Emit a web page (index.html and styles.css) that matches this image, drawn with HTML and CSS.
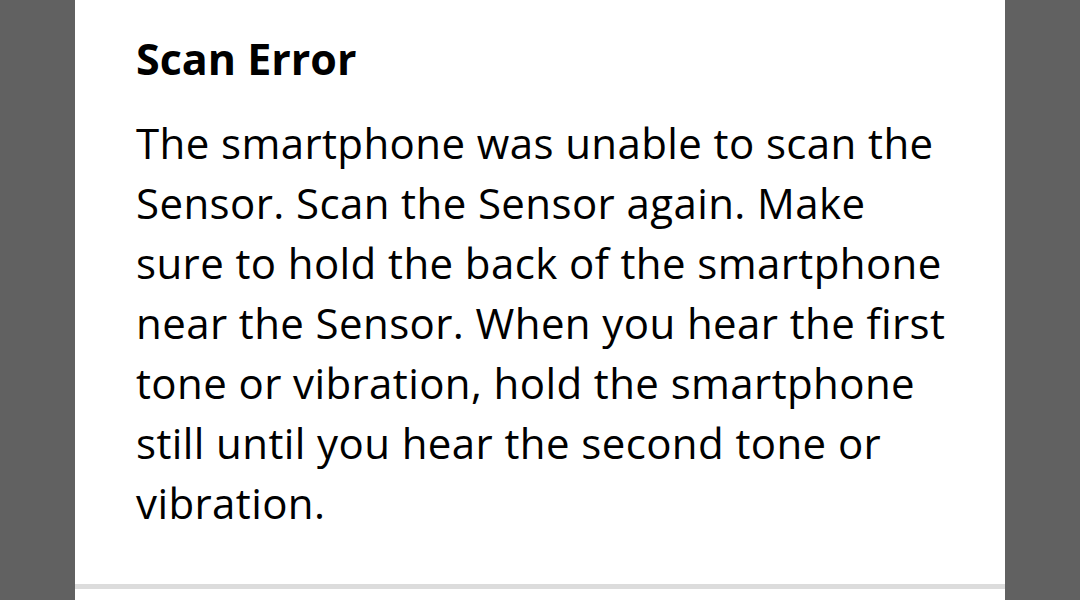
FILE: index.html
```html
<!DOCTYPE html>
<html lang="en">
<head>
  <meta charset="UTF-8">
  <meta name="viewport" content="width=device-width, initial-scale=1.0">
  <title>Scan Error</title>
  <link rel="stylesheet" href="styles.css">
</head>
<body>
  <div class="dialog">
    <h1 class="dialog-title">Scan Error</h1>
    <p class="dialog-message">The smartphone was unable to scan the Sensor. Scan the Sensor again. Make sure to hold the back of the smartphone near the Sensor. When you hear the first tone or vibration, hold the smartphone still until you hear the second tone or vibration.</p>
    <div class="dialog-divider"></div>
  </div>
</body>
</html>
```

FILE: styles.css
```css
* {
  margin: 0;
  padding: 0;
  box-sizing: border-box;
}

body {
  font-family: 'Open Sans', 'Noto Sans', sans-serif;
  background-color: #616161;
  color: #000;
  height: 600px;
  overflow: hidden;
}

.dialog {
  margin: 0 75px;
  background-color: #fff;
  height: 700px;
  padding: 31px 52px 0 61px;
}

.dialog-title {
  font-size: 43px;
  font-weight: 700;
  line-height: 56px;
  margin-bottom: 26px;
}

.dialog-message {
  font-size: 42px;
  line-height: 60px;
  letter-spacing: 0.4px;
}

.dialog-divider {
  height: 5px;
  background-color: #dcdcdc;
  margin: 51px -52px 0 -61px;
}
```
